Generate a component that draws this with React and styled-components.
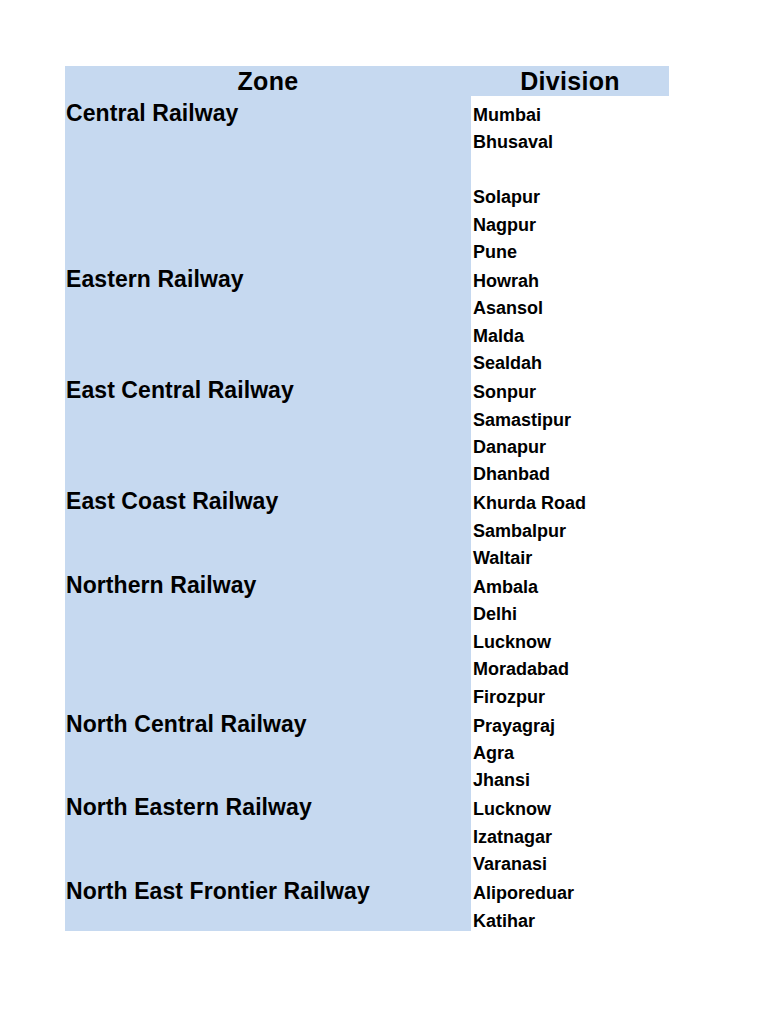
import React from "react";
import styled, { createGlobalStyle } from "styled-components";

const GlobalStyle = createGlobalStyle`
  html, body {
    margin: 0;
    padding: 0;
    background: #ffffff;
  }
  body {
    font-family: "Liberation Sans", Arial, sans-serif;
    color: #000;
  }
`;

const BLUE = "#c6d9f0";

const zones = [
  { name: "Central Railway", divisions: ["Mumbai", "Bhusaval", "", "Solapur", "Nagpur", "Pune"] },
  { name: "Eastern Railway", divisions: ["Howrah", "Asansol", "Malda", "Sealdah"] },
  { name: "East Central Railway", divisions: ["Sonpur", "Samastipur", "Danapur", "Dhanbad"] },
  { name: "East Coast Railway", divisions: ["Khurda Road", "Sambalpur", "Waltair"] },
  { name: "Northern Railway", divisions: ["Ambala", "Delhi", "Lucknow", "Moradabad", "Firozpur"] },
  { name: "North Central Railway", divisions: ["Prayagraj", "Agra", "Jhansi"] },
  { name: "North Eastern Railway", divisions: ["Lucknow", "Izatnagar", "Varanasi"] },
  { name: "North East Frontier Railway", divisions: ["Aliporeduar", "Katihar"] },
];

const Page = styled.div`
  padding: 66px 0 0 65px;
  min-height: 1024px;
  box-sizing: border-box;
`;

const Sheet = styled.div`
  width: 604px;
`;

const Row = styled.div`
  display: grid;
  grid-template-columns: 406px 198px;
`;

const HeaderCell = styled.div`
  height: 30px;
  background: ${BLUE};
  display: flex;
  align-items: center;
  justify-content: center;
  font-size: 25px;
  font-weight: bold;
  letter-spacing: 0.3px;
  line-height: 1;
`;

const ZoneCell = styled.div`
  background: ${BLUE};
`;

const ZoneName = styled.div`
  height: 29px;
  display: flex;
  align-items: flex-end;
  padding: 0 0 0 1px;
  box-sizing: border-box;
  font-size: 23px;
  font-weight: bold;
  letter-spacing: 0.08px;
  line-height: 1;
  white-space: nowrap;
`;

const DivisionList = styled.div`
  display: flex;
  flex-direction: column;
`;

const DivisionRow = styled.div`
  height: ${(p) => (p.$first ? "29px" : "27.4px")};
  display: flex;
  align-items: flex-end;
  padding: 0 0 1px 2px;
  box-sizing: border-box;
  font-size: 18px;
  font-weight: bold;
  line-height: 1;
  white-space: nowrap;
`;

const App = () => {
  return (
    <Page>
      <GlobalStyle />
      <Sheet>
        <Row>
          <HeaderCell>Zone</HeaderCell>
          <HeaderCell>Division</HeaderCell>
        </Row>
        {zones.map((zone) => (
          <Row key={zone.name}>
            <ZoneCell>
              <ZoneName>{zone.name}</ZoneName>
            </ZoneCell>
            <DivisionList>
              {zone.divisions.map((d, i) => (
                <DivisionRow key={i} $first={i === 0}>
                  {d}
                </DivisionRow>
              ))}
            </DivisionList>
          </Row>
        ))}
      </Sheet>
    </Page>
  );
};

export default App;
